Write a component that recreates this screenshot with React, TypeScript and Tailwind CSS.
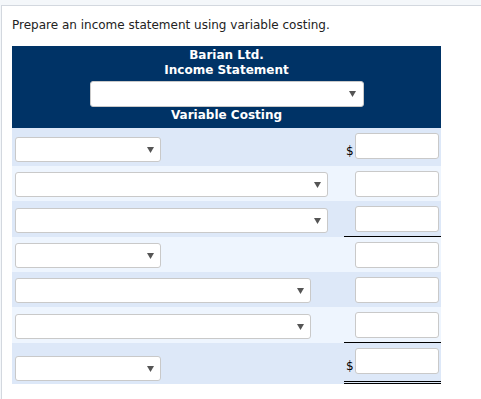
import React from 'react'

const font = { fontFamily: '"DejaVu Sans", Verdana, sans-serif' }

function Arrow() {
  return (
    <svg width="7" height="6" viewBox="0 0 7 6" className="shrink-0">
      <polygon points="0,0 7,0 3.5,6" fill="#555" />
    </svg>
  )
}

function Select({ className }: { className: string }) {
  return (
    <div className={`h-[25px] bg-white border border-[#c9c9c9] rounded-[3px] flex items-center justify-end pr-[6px] ${className}`}>
      <Arrow />
    </div>
  )
}

const rows = [
  { h: 'h-[38px]', sel: 'w-[146px] mt-[9px]', dollar: true, line: '', bg: 'bg-[#dde8f8]' },
  { h: 'h-[35px]', sel: 'w-[313px] mt-[6px]', dollar: false, line: '', bg: 'bg-[#eef5fe]' },
  { h: 'h-[36px]', sel: 'w-[313px] mt-[7px]', dollar: false, line: 'border-b border-black', bg: 'bg-[#dde8f8]' },
  { h: 'h-[35px]', sel: 'w-[146px] mt-[6px]', dollar: false, line: '', bg: 'bg-[#eef5fe]' },
  { h: 'h-[35px]', sel: 'w-[296px] mt-[6px]', dollar: false, line: '', bg: 'bg-[#dde8f8]' },
  { h: 'h-[36px]', sel: 'w-[296px] mt-[7px]', dollar: false, line: 'border-b border-black', bg: 'bg-[#eef5fe]' },
  { h: 'h-[41px]', sel: 'w-[146px] mt-[13px]', dollar: true, line: 'border-b-[3px] border-double border-black', bg: 'bg-[#dde8f8]' },
]

export default function App() {
  return (
    <div className="w-[481px] h-[399px] bg-[#f4f7fa] pt-[5px] pl-[1px] overflow-hidden" style={font}>
      <div className="h-full bg-white border-t border-l border-[#d3d8df] pl-[10px] pt-[11px]">
        <p className="text-[12px] leading-[16px] text-[#222]">Prepare an income statement using variable costing.</p>

        <div className="mt-[13px] w-[429px]">
          <div className="bg-[#003366] text-white font-bold text-[12px] leading-[15px] text-center pt-[2px] pb-[5px] flex flex-col items-center">
            <div>Barian Ltd.</div>
            <div>Income Statement</div>
            <Select className="w-[274px] h-[26px] mt-[3px] !pr-[7px]" />
            <div className="mt-[1px]">Variable Costing</div>
          </div>

          {rows.map((r, i) => (
            <div key={i} className={`flex justify-between ${r.h} ${r.bg}`}>
              <div className="pl-[3px]">
                <Select className={r.sel} />
              </div>
              <div className={`w-[97px] flex items-start ${r.line}`}>
                <div className="flex items-end mt-[5px] w-full">
                  <span className="text-[12px] leading-[15px] text-black w-[11px] pl-[2px]">{r.dollar ? '$' : ''}</span>
                  <div className="w-[84px] h-[26px] bg-white border border-[#c9c9c9] rounded-[3px]" />
                </div>
              </div>
            </div>
          ))}
        </div>
      </div>
    </div>
  )
}
